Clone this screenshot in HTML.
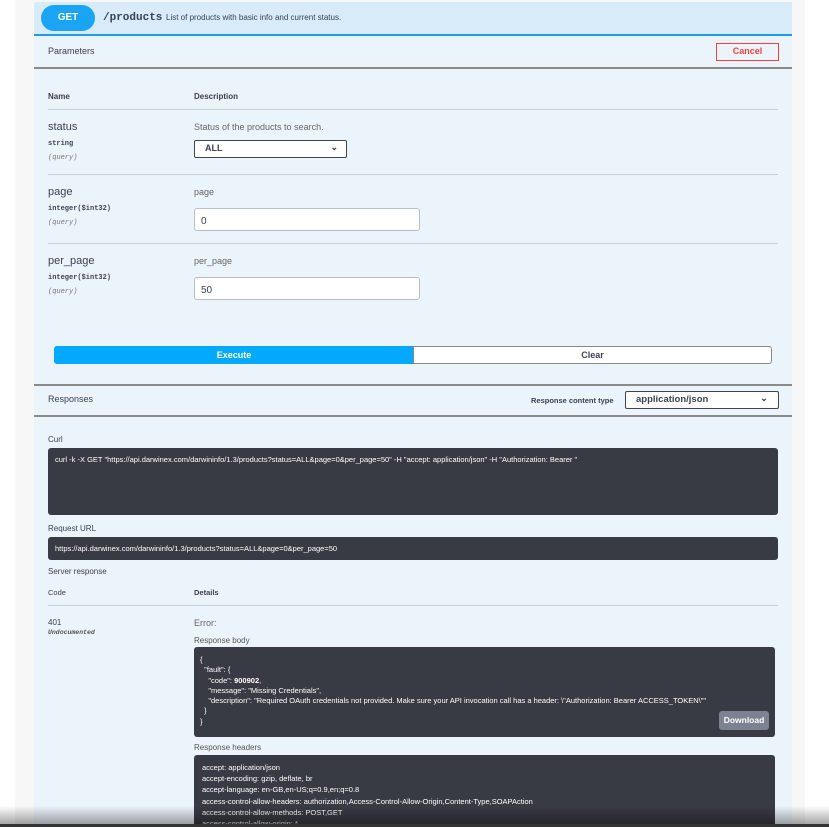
<!DOCTYPE html>
<html style="overflow:hidden"><head><meta charset="utf-8"><style>
*{margin:0;padding:0;box-sizing:border-box}
html,body{width:829px;height:827px;overflow:hidden}
body{background:#fff;font-family:"Liberation Sans",sans-serif;color:#3b4151;position:relative}
.a{position:absolute;white-space:nowrap}
.gut{position:absolute;left:15px;top:0;width:790px;height:827px;background:#f7f7f7}
.blk{position:absolute;left:34px;top:2px;width:758px;height:825px;background:#ebf3fb}
.hd{position:absolute;left:34px;top:2px;width:758px;height:34px;background:#d7ebf8;border-bottom:2px solid #1e9ee8}
.ln{position:absolute;left:34px;width:758px;height:2px;background:#8a8a8a}
.lt{position:absolute;left:48px;width:730px;height:1px;background:#c9d2db}
.s{font-size:9px;color:#3b4151}
.b{font-weight:bold}
.m{font-family:"Liberation Mono",monospace}
.inp{position:absolute;background:#fff;border:1px solid #b9bec4;border-radius:3px;font-size:10px;padding:8px 6px;line-height:1}
.sel{position:absolute;background:#fff;border:1.5px solid #41444e;border-radius:2px;font-size:10px;font-weight:bold;padding:2px 10px}
.dk{position:absolute;left:48px;width:730px;background:#393b44;border-radius:3px;color:#fff;font-size:7.5px;overflow:hidden}
</style></head><body>
<div class="gut"></div>
<div class="blk"></div>
<div class="hd"></div>
<div class="a" style="left:41px;top:5px;width:54px;height:26px;border-radius:13px;background:#1ba4f3;color:#fff;font-weight:bold;font-size:10px;text-align:center;line-height:26px">GET</div>
<div class="a m b" style="left:103px;top:12px;font-size:11px;color:#3b4151">/products</div>
<div class="a" style="left:166px;top:13px;font-size:8px;color:#3b4151">List of products with basic info and current status.</div>
<div class="a s" style="left:48px;top:46px">Parameters</div>
<div class="a" style="left:716px;top:43px;width:63px;height:18px;border:1.5px solid #f93e3e;color:#f93e3e;font-weight:bold;font-size:9px;text-align:center;line-height:15px;background:#ebf3fb">Cancel</div>
<div class="ln" style="top:67px"></div>
<div class="a b" style="left:48px;top:92px;font-size:8px">Name</div>
<div class="a b" style="left:194px;top:92px;font-size:8px">Description</div>
<div class="lt" style="top:109px"></div>

<div class="a" style="left:48px;top:121px;font-size:11px">status</div>
<div class="a m b" style="left:48px;top:140px;font-size:7px">string</div>
<div class="a m" style="left:48px;top:154px;font-size:7px;font-style:italic;color:#777">(query)</div>
<div class="a" style="left:194px;top:122px;font-size:9px;color:#666">Status of the products to search.</div>
<div class="sel" style="left:194px;top:140px;width:153px;height:18px;font-size:9px">ALL<span style="position:absolute;right:8px;top:1px;font-size:9px">⌄</span></div>
<div class="lt" style="top:174px"></div>

<div class="a" style="left:48px;top:186px;font-size:11px">page</div>
<div class="a m b" style="left:48px;top:205px;font-size:7px">integer($int32)</div>
<div class="a m" style="left:48px;top:219px;font-size:7px;font-style:italic;color:#777">(query)</div>
<div class="a" style="left:194px;top:187px;font-size:9px;color:#666">page</div>
<div class="inp" style="left:194px;top:208px;width:226px;height:23px">0</div>
<div class="lt" style="top:243px"></div>

<div class="a" style="left:48px;top:255px;font-size:11px">per_page</div>
<div class="a m b" style="left:48px;top:274px;font-size:7px">integer($int32)</div>
<div class="a m" style="left:48px;top:288px;font-size:7px;font-style:italic;color:#777">(query)</div>
<div class="a" style="left:194px;top:256px;font-size:9px;color:#666">per_page</div>
<div class="inp" style="left:194px;top:277px;width:226px;height:23px">50</div>

<div class="a" style="left:54px;top:346px;width:360px;height:18px;background:#03a9fb;border-radius:3px 0 0 3px;color:#fff;font-weight:bold;font-size:9px;text-align:center;line-height:18px">Execute</div>
<div class="a" style="left:413px;top:346px;width:359px;height:18px;background:#fff;border:1px solid #888;border-radius:0 3px 3px 0;font-weight:bold;font-size:9px;text-align:center;line-height:16px">Clear</div>
<div class="ln" style="top:384px"></div>
<div class="a s" style="left:48px;top:394px">Responses</div>
<div class="a b" style="left:531px;top:396px;font-size:7.5px">Response content type</div>
<div class="sel" style="left:625px;top:391px;width:154px;height:18px;font-size:9.5px">application/json<span style="position:absolute;right:10px;top:1px">⌄</span></div>
<div class="ln" style="top:415px"></div>

<div class="a" style="left:48px;top:435px;font-size:8px">Curl</div>
<div class="dk" style="top:448px;height:67px;padding:7px 7px">curl -k -X GET "https://api.darwinex.com/darwininfo/1.3/products?status=ALL&amp;page=0&amp;per_page=50" -H "accept: application/json" -H "Authorization: Bearer "</div>
<div class="a" style="left:48px;top:524px;font-size:8px">Request URL</div>
<div class="dk" style="top:537px;height:23px;padding:7px 7px">https://api.darwinex.com/darwininfo/1.3/products?status=ALL&amp;page=0&amp;per_page=50</div>
<div class="a" style="left:48px;top:567px;font-size:8px">Server response</div>
<div class="a" style="left:48px;top:588px;font-size:7.5px">Code</div>
<div class="a b" style="left:194px;top:588px;font-size:7.5px">Details</div>
<div class="lt" style="top:605px"></div>
<div class="a" style="left:48px;top:618px;font-size:8px">401</div>
<div class="a m b" style="left:48px;top:629px;font-size:6.5px;font-style:italic;color:#555">Undocumented</div>
<div class="a" style="left:194px;top:618px;font-size:9px;color:#666">Error:</div>
<div class="a" style="left:194px;top:636px;font-size:8px;color:#555">Response body</div>
<div class="dk" style="left:194px;width:581px;top:647px;height:90px;padding:8px 6px;line-height:10.3px;white-space:pre">{
  "fault": {
    "code": <b>900902</b>,
    "message": "Missing Credentials",
    "description": "Required OAuth credentials not provided. Make sure your API invocation call has a header: \"Authorization: Bearer ACCESS_TOKEN\""
  }
}</div>
<div class="a" style="left:719px;top:711px;width:50px;height:19px;background:#7d8293;border-radius:3px;color:#fff;font-weight:bold;font-size:8.5px;text-align:center;line-height:19px">Download</div>
<div class="a" style="left:194px;top:743px;font-size:8px;color:#555">Response headers</div>
<div class="dk" style="left:194px;width:581px;top:755px;height:72px;padding:7px 8px;line-height:11.2px;white-space:pre">accept: application/json
accept-encoding: gzip, deflate, br
accept-language: en-GB,en-US;q=0.9,en;q=0.8
access-control-allow-headers: authorization,Access-Control-Allow-Origin,Content-Type,SOAPAction
access-control-allow-methods: POST,GET
access-control-allow-origin: *</div>
<div class="a" style="left:0;top:806px;width:829px;height:18px;background:linear-gradient(rgba(0,0,0,0),rgba(0,0,0,0.35))"></div>
<div class="a" style="left:0;top:824px;width:829px;height:3px;background:#333"></div>
</body></html>
